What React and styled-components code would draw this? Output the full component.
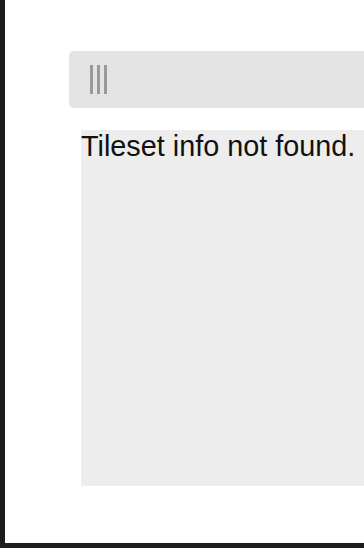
import React from "react"
import styled, { createGlobalStyle } from "styled-components"

const GlobalStyle = createGlobalStyle`
  html, body {
    margin: 0;
    padding: 0;
    background: #ffffff;
  }
  body {
    font-family: "Liberation Sans", Arial, sans-serif;
  }
`

const Frame = styled.div`
  box-sizing: border-box;
  width: 364px;
  height: 548px;
  overflow: hidden;
  background: #ffffff;
  border-left: 5px solid #1c1c1c;
  border-bottom: 5px solid #1c1c1c;
  padding: 51px 0 0 64px;
`

const Toolbar = styled.div`
  display: flex;
  align-items: center;
  gap: 4px;
  width: 420px;
  height: 57px;
  padding-left: 21px;
  box-sizing: border-box;
  background: #e3e3e3;
  border-radius: 5px;
`

const HandleLine = styled.span`
  display: block;
  width: 3px;
  height: 29px;
  background: #999999;
`

const InfoPanel = styled.div`
  width: 420px;
  height: 356px;
  margin: 22px 0 0 12px;
  background: #ededed;
  color: #111111;
  font-size: 28.8px;
  line-height: normal;
  white-space: nowrap;
`

const App = () => {
  return (
    <>
      <GlobalStyle />
      <Frame>
        <Toolbar>
          <HandleLine />
          <HandleLine />
          <HandleLine />
        </Toolbar>
        <InfoPanel>Tileset info not found.</InfoPanel>
      </Frame>
    </>
  )
}

export default App
